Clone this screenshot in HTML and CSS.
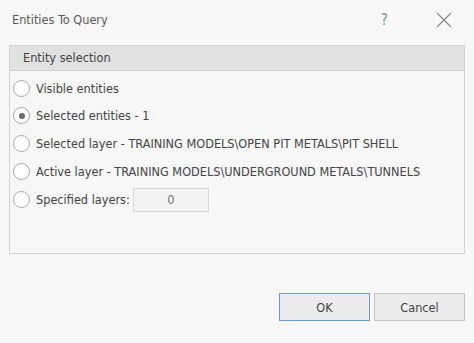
FILE: index.html
```html
<!DOCTYPE html>
<html lang="en">
<head>
    <meta charset="UTF-8">
    <title>Entities To Query</title>
    <link rel="stylesheet" href="styles.css">
</head>
<body>
    <div class="dialog">
        <div class="title-bar">
            <span class="title">Entities To Query</span>
            <span class="help">?</span>
            <svg class="close" width="16" height="16" viewBox="0 0 16 16">
                <path d="M1 1 L15 15 M15 1 L1 15" stroke="#8a8a8a" stroke-width="1.3" fill="none"/>
            </svg>
        </div>

        <div class="group">
            <div class="group-header">Entity selection</div>
            <div class="group-body">
                <label class="radio-row"><span class="radio"></span>Visible entities</label>
                <label class="radio-row"><span class="radio checked"></span>Selected entities - 1</label>
                <label class="radio-row"><span class="radio"></span>Selected layer - TRAINING MODELS\OPEN PIT METALS\PIT SHELL</label>
                <label class="radio-row"><span class="radio"></span>Active layer - TRAINING MODELS\UNDERGROUND METALS\TUNNELS</label>
                <label class="radio-row"><span class="radio"></span>Specified layers:<span class="num-box">0</span></label>
            </div>
        </div>

        <div class="buttons">
            <button class="btn default">OK</button>
            <button class="btn">Cancel</button>
        </div>
    </div>
</body>
</html>
```

FILE: styles.css
```css
body {
    margin: 0;
    background: #f7f7f7;
    font-family: Tahoma, "DejaVu Sans Condensed", "Liberation Sans", sans-serif;
    font-size: 12.6px;
    color: #444;
}

.dialog {
    width: 474px;
    height: 343px;
    display: flex;
    flex-direction: column;
}

.title-bar {
    height: 45px;
    display: flex;
    align-items: center;
    padding-left: 12px;
    padding-bottom: 6px;
    box-sizing: border-box;
}

.title {
    flex: 1;
    color: #5a5a5a;
}

.help {
    color: #8a8a8a;
    font-size: 15px;
    margin-right: 48px;
}

.close {
    margin-right: 22px;
}

.group {
    margin: 0 9px;
    height: 207px;
    border: 1px solid #d4d4d4;
    background: #f7f7f7;
    display: flex;
    flex-direction: column;
}

.group-header {
    height: 24px;
    line-height: 24px;
    padding-left: 13px;
    background: #e1e1e1;
    border-bottom: 1px solid #d0d0d0;
}

.group-body {
    padding-top: 4px;
    padding-left: 3px;
    display: flex;
    flex-direction: column;
}

.radio-row {
    height: 27px;
    display: flex;
    align-items: center;
}

.radio-row:nth-child(n+3) {
    margin-top: 1px;
}

.radio {
    width: 17px;
    height: 17px;
    border: 1px solid #a8a8a8;
    border-radius: 50%;
    background: #fdfdfd;
    box-sizing: border-box;
    margin-right: 6px;
    display: flex;
    align-items: center;
    justify-content: center;
}

.radio.checked::after {
    content: "";
    width: 6px;
    height: 6px;
    border-radius: 50%;
    background: #6a6a6a;
}

.num-box {
    margin-left: 3px;
    width: 76px;
    height: 24px;
    border: 1px solid #d8d8d8;
    background: #f3f3f3;
    box-sizing: border-box;
    display: flex;
    align-items: center;
    justify-content: center;
    color: #707070;
}

.buttons {
    display: flex;
    justify-content: flex-end;
    gap: 4px;
    margin-top: 39px;
    padding-right: 9px;
}

.btn {
    width: 91px;
    height: 28px;
    font-family: inherit;
    font-size: 12.6px;
    color: #444;
    background: #ececec;
    border: 1px solid #c4c4c4;
}

.btn.default {
    border-color: #6d9bcf;
}
```
